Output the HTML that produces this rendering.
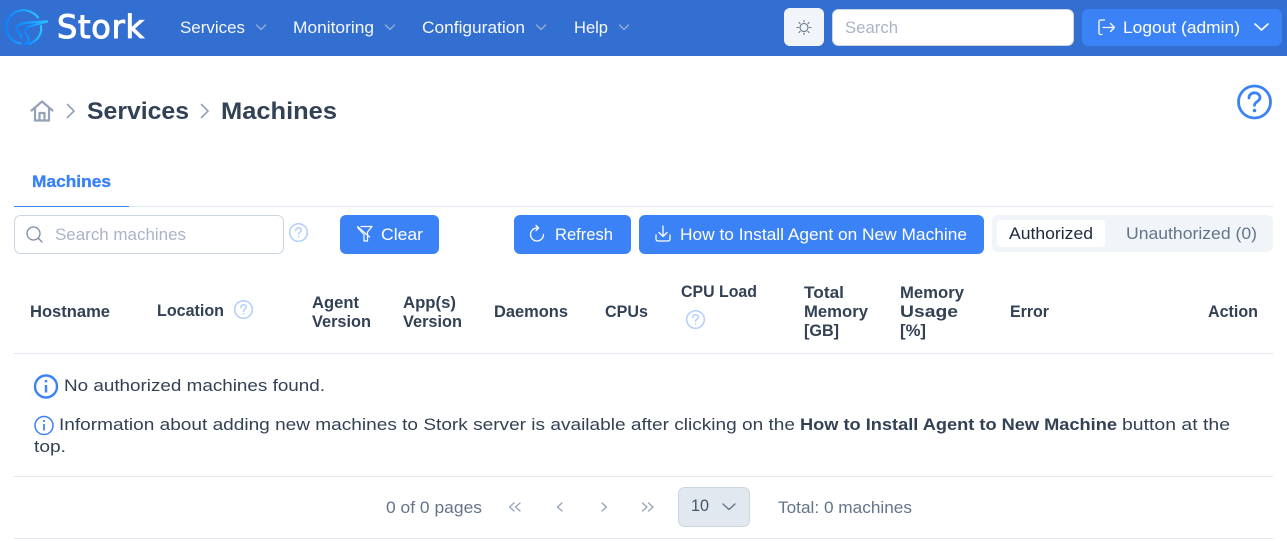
<!DOCTYPE html>
<html><head><meta charset="utf-8"><title>Stork - Machines</title>
<style>
html,body{margin:0;padding:0;background:#fff;width:1287px;height:541px;overflow:hidden}
svg{display:block}
text{font-family:"Liberation Sans",Arial,sans-serif;font-size:16.5px;white-space:pre}
.b{font-weight:700}
.h{font-weight:700;fill:#334155}
.n{fill:#f4f7fd}
.w{fill:#fff}
.g{fill:#334155;font-size:16.5px}
.p{fill:#64748b;font-size:16.5px}
.ph{fill:#a9b4c4;font-size:16.5px}
.s{fill:none;stroke-linecap:round;stroke-linejoin:round}
</style></head><body>
<svg width="1287" height="541" viewBox="0 0 1287 541" xmlns="http://www.w3.org/2000/svg">
<defs><linearGradient id="lg" x1="0" y1="0" x2="1" y2="0"><stop offset="0" stop-color="#0b84ff"/><stop offset="1" stop-color="#2ec0ff"/></linearGradient></defs>
<rect width="1287" height="56" fill="#336fd0"/>
<!-- logo -->
<g class="s" stroke="url(#lg)" fill="none" stroke-width="2.200">
<path d="M38 17.500C33 11 24 8.500 17 11.500C8 15 4.500 25 7.500 33C10 39.500 15 42.800 21 43.300"/>
<path d="M41 26C42.500 34 37 42 27 44.300"/>
<path d="M47 21.500L29 22.500C22 23.200 16.500 24.500 16.300 28.500C16 32 21 33.500 21.500 37.500"/>
<path d="M47 21.500L33 25.500C26 27 24 29.500 26 33.500C28.500 38 31.500 40 24.500 44.500"/>
</g>
<text x="57" y="38" class="w" stroke="#fff" stroke-width="1" style="font-size:32px;font-family:'DejaVu Sans',sans-serif" textLength="87" lengthAdjust="spacing">Stork</text>
<!-- nav -->
<text x="180" y="33" class="n" textLength="65" lengthAdjust="spacingAndGlyphs">Services</text>
<text x="293" y="33" class="n" textLength="81" lengthAdjust="spacingAndGlyphs">Monitoring</text>
<text x="422" y="33" class="n" textLength="103" lengthAdjust="spacingAndGlyphs">Configuration</text>
<text x="574" y="33" class="n" textLength="34" lengthAdjust="spacingAndGlyphs">Help</text>
<g class="s" stroke="#8fa9d6" stroke-width="1.500">
<path d="M256.500 25l4.500 4.500 4.500-4.500"/><path d="M385.500 25l4.500 4.500 4.500-4.500"/><path d="M536.500 25l4.500 4.500 4.500-4.500"/><path d="M619.500 25l4.500 4.500 4.500-4.500"/>
</g>
<!-- theme button -->
<rect x="784" y="8" width="40" height="38" rx="6" fill="#f1f5f9"/>
<g class="s" stroke="#64748b" stroke-width="1.100">
<circle cx="804" cy="27.500" r="4"/>
<path d="M804 20.500v1.500M804 33v1.500M797 27.500h1.500M809.500 27.500h1.500M799 22.500l1 1M808 31.500l1 1M799 32.500l1-1M808 23.500l1-1"/>
</g>
<!-- search -->
<rect x="832.500" y="9.500" width="241" height="36" rx="6" fill="#fff" stroke="#cbd5e1"/>
<text x="845" y="33" class="ph" textLength="53" lengthAdjust="spacingAndGlyphs">Search</text>
<!-- logout -->
<rect x="1082" y="9" width="200" height="37" rx="6" fill="#3b82f6"/>
<g class="s" stroke="#fff" stroke-width="1.300">
<path d="M1104.500 20h-4a1.500 1.500 0 0 0-1.500 1.500v11.500a1.500 1.500 0 0 0 1.500 1.500h1.500"/>
<path d="M1103 27.500h11.500M1110.500 23.500l4 4-4 4"/>
</g>
<text x="1123" y="33" class="w" textLength="117" lengthAdjust="spacingAndGlyphs">Logout (admin)</text>
<path class="s" stroke="#fff" stroke-width="1.600" d="M1255 24l6.500 6 6.500-6"/>
<!-- help -->
<circle cx="1254.500" cy="102" r="16" fill="none" stroke="#3b82f6" stroke-width="2.800"/>
<path class="s" stroke="#3b82f6" stroke-width="2.800" d="M1249 98c0-3.300 2.500-5.200 5.500-5.200s5.500 2 5.500 4.800c0 4-5.500 4-5.500 7.700"/>
<circle cx="1254.500" cy="110.500" r="1.800" fill="#3b82f6"/>
<!-- breadcrumb -->
<g class="s" stroke="#94a3b8" stroke-width="2.200">
<path d="M31.500 110.500L42 101.500l10.500 9"/>
<path d="M35 108v12.500h14V108"/>
<path d="M39.500 120.500v-7.500h5v7.500"/>
</g>
<path class="s" stroke="#94a3b8" stroke-width="1.700" d="M67.500 104.500l6.500 6.500-6.500 6.500"/>
<text x="87" y="119" class="b" style="font-size:24px" fill="#334155" textLength="102" lengthAdjust="spacingAndGlyphs">Services</text>
<path class="s" stroke="#94a3b8" stroke-width="1.700" d="M201.500 104.500l6.500 6.500-6.500 6.500"/>
<text x="221" y="119" class="b" style="font-size:24px" fill="#334155" textLength="116" lengthAdjust="spacingAndGlyphs">Machines</text>
<!-- tabs -->
<text x="32" y="187" class="b" fill="#3b82f6" stroke="#3b82f6" stroke-width=".35" textLength="79" lengthAdjust="spacingAndGlyphs">Machines</text>
<rect x="14" y="206" width="1259" height="1" fill="#e2e8f0"/>
<rect x="14" y="206" width="115" height="1" fill="#3b82f6"/>
<!-- filter -->
<rect x="14.500" y="215.500" width="269" height="38" rx="6" fill="#fff" stroke="#cbd5e1"/>
<circle cx="33.500" cy="233.500" r="6.500" fill="none" stroke="#7b8aa0" stroke-width="1.300"/>
<path class="s" stroke="#7b8aa0" stroke-width="1.300" d="M38.500 238.500l3.500 3.500"/>
<text x="55" y="240" class="ph" textLength="131" lengthAdjust="spacingAndGlyphs">Search machines</text>
<g class="s" stroke="#b1cefb" stroke-width="1.500">
<circle cx="298.500" cy="232.500" r="8.800"/>
<path d="M295.800 230.500c0-1.800 1.200-2.800 2.800-2.800s2.700 1 2.700 2.500c0 2-2.700 2-2.700 4"/>
<path d="M298.600 236.800v.2"/>
</g>
<rect x="340" y="215" width="99" height="39" rx="6" fill="#3b82f6"/>
<g class="s" stroke="#fff" stroke-width="1.200">
<path d="M361 226.500h11l-4.500 5.500v9h-3.500v-6.500L358 228"/>
<path d="M357.500 226.500l12 10.500"/>
</g>
<text x="381" y="240" class="w" textLength="42" lengthAdjust="spacingAndGlyphs">Clear</text>
<rect x="514" y="215" width="117" height="39" rx="6" fill="#3b82f6"/>
<g class="s" stroke="#fff" stroke-width="1.300">
<path d="M537 228a6.500 6.500 0 1 0 6.500 6.500"/>
<path d="M536 225.500l2.500 2.500-2.500 2.500"/>
</g>
<text x="555" y="240" class="w" textLength="58" lengthAdjust="spacingAndGlyphs">Refresh</text>
<rect x="639" y="215" width="345" height="39" rx="6" fill="#3b82f6"/>
<g class="s" stroke="#fff" stroke-width="1.300">
<path d="M663 226v10M659 232.500l4 4 4-4"/>
<path d="M656 235v4a2 2 0 0 0 2 2h10a2 2 0 0 0 2-2v-4"/>
</g>
<text x="680" y="240" class="w" textLength="287" lengthAdjust="spacingAndGlyphs">How to Install Agent on New Machine</text>
<rect x="992" y="215" width="281" height="37" rx="6" fill="#f1f5f9"/>
<rect x="997" y="220" width="108" height="27" rx="4" fill="#fff"/>
<text x="1009" y="239" fill="#1e293b" textLength="84" lengthAdjust="spacingAndGlyphs">Authorized</text>
<text x="1126" y="239" class="p" textLength="131" lengthAdjust="spacingAndGlyphs">Unauthorized (0)</text>
<!-- table head -->
<text x="30" y="317" class="h" textLength="80" lengthAdjust="spacingAndGlyphs">Hostname</text>
<text x="157" y="316" class="h" textLength="67" lengthAdjust="spacingAndGlyphs">Location</text>
<g class="s" stroke="#b1cefb" stroke-width="1.500">
<circle cx="243.500" cy="309.500" r="8.800"/>
<path d="M240.800 307.500c0-1.800 1.200-2.800 2.800-2.800s2.700 1 2.700 2.500c0 2-2.700 2-2.700 4"/>
<path d="M243.600 313.800v.2"/>
<circle cx="695.500" cy="319.500" r="8.800"/>
<path d="M692.800 317.500c0-1.800 1.200-2.800 2.800-2.800s2.700 1 2.700 2.500c0 2-2.700 2-2.700 4"/>
<path d="M695.600 323.800v.2"/>
</g>
<text x="312" y="308" class="h" textLength="47" lengthAdjust="spacingAndGlyphs">Agent</text>
<text x="312" y="327" class="h" textLength="59" lengthAdjust="spacingAndGlyphs">Version</text>
<text x="403" y="308" class="h" textLength="53" lengthAdjust="spacingAndGlyphs">App(s)</text>
<text x="403" y="327" class="h" textLength="59" lengthAdjust="spacingAndGlyphs">Version</text>
<text x="494" y="317" class="h" textLength="74" lengthAdjust="spacingAndGlyphs">Daemons</text>
<text x="605" y="317" class="h" textLength="43" lengthAdjust="spacingAndGlyphs">CPUs</text>
<text x="681" y="297" class="h" textLength="76" lengthAdjust="spacingAndGlyphs">CPU Load</text>
<text x="804" y="298" class="h" textLength="40" lengthAdjust="spacingAndGlyphs">Total</text>
<text x="804" y="317" class="h" textLength="64" lengthAdjust="spacingAndGlyphs">Memory</text>
<text x="804" y="336" class="h" textLength="35" lengthAdjust="spacingAndGlyphs">[GB]</text>
<text x="900" y="298" class="h" textLength="64" lengthAdjust="spacingAndGlyphs">Memory</text>
<text x="900" y="317" class="h" textLength="58" lengthAdjust="spacingAndGlyphs">Usage</text>
<text x="900" y="336" class="h" textLength="26" lengthAdjust="spacingAndGlyphs">[%]</text>
<text x="1010" y="317" class="h" textLength="39" lengthAdjust="spacingAndGlyphs">Error</text>
<text x="1208" y="317" class="h" textLength="50" lengthAdjust="spacingAndGlyphs">Action</text>
<rect x="14" y="353" width="1259" height="1" fill="#e2e8f0"/>
<!-- empty message -->
<circle cx="46" cy="386.500" r="11" fill="none" stroke="#3b82f6" stroke-width="2.400"/>
<path stroke="#3b82f6" stroke-width="2.400" d="M46 385v7.500M46 380v2.400"/>
<text x="64" y="391" class="g" textLength="261" lengthAdjust="spacingAndGlyphs">No authorized machines found.</text>
<circle cx="44" cy="425.500" r="9" fill="none" stroke="#3b82f6" stroke-width="1.500"/>
<path stroke="#3b82f6" stroke-width="1.700" d="M44 424v6.500M44 420v2"/>
<text x="59" y="430" class="g" textLength="736" lengthAdjust="spacingAndGlyphs">Information about adding new machines to Stork server is available after clicking on the</text>
<text x="800" y="430" class="b g" textLength="317" lengthAdjust="spacingAndGlyphs">How to Install Agent to New Machine</text>
<text x="1122" y="430" class="g" textLength="108" lengthAdjust="spacingAndGlyphs">button at the</text>
<text x="34" y="452" class="g" textLength="32" lengthAdjust="spacingAndGlyphs">top.</text>
<rect x="14" y="476" width="1259" height="1" fill="#e2e8f0"/>
<!-- paginator -->
<text x="386" y="513" class="p" textLength="96" lengthAdjust="spacingAndGlyphs">0 of 0 pages</text>
<g class="s" stroke="#94a3b8" stroke-width="1.300">
<path d="M514 503l-4.500 4 4.500 4M520 503l-4.500 4 4.500 4"/>
<path d="M562 503l-4.500 4 4.500 4"/>
<path d="M602 503l4.500 4-4.500 4"/>
<path d="M642.500 503l4.500 4-4.500 4M648.500 503l4.500 4-4.500 4"/>
</g>
<rect x="678.500" y="487.500" width="71" height="39" rx="6" fill="#e2e8f0" stroke="#cbd5e1"/>
<text x="691" y="511" fill="#475569" style="font-size:17px" textLength="18" lengthAdjust="spacingAndGlyphs">10</text>
<path class="s" stroke="#64748b" stroke-width="1.400" d="M723 504l6 5.500 6-5.500"/>
<text x="778" y="513" class="p" textLength="134" lengthAdjust="spacingAndGlyphs">Total: 0 machines</text>
<rect x="14" y="538" width="1259" height="1" fill="#e2e8f0"/>
</svg>
</body></html>
